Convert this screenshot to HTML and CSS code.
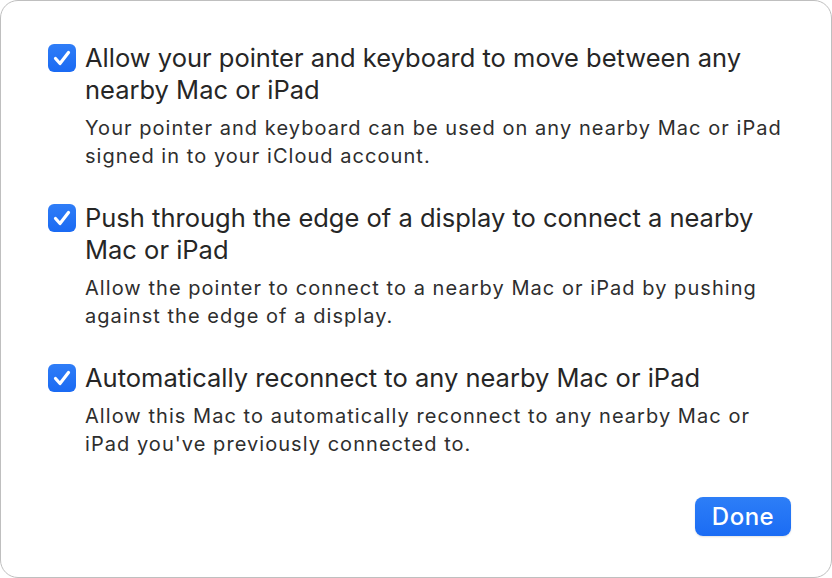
FILE: index.html
```html
<!DOCTYPE html>
<html>
<head>
<meta charset="utf-8">
<link rel="stylesheet" href="styles.css">
</head>
<body>
<div class="window">
  <div class="options">
    <div class="option">
      <span class="check"><svg viewBox="0 0 28 28" width="28" height="28"><path d="M7.5 14.5 L12 19.5 L20.5 8.5" fill="none" stroke="#fff" stroke-width="3.2" stroke-linecap="round" stroke-linejoin="round"/></svg></span>
      <div class="texts">
        <div class="title">Allow your pointer and keyboard to move between any nearby Mac or iPad</div>
        <div class="desc">Your pointer and keyboard can be used on any nearby Mac or iPad signed in to your iCloud account.</div>
      </div>
    </div>
    <div class="option">
      <span class="check"><svg viewBox="0 0 28 28" width="28" height="28"><path d="M7.5 14.5 L12 19.5 L20.5 8.5" fill="none" stroke="#fff" stroke-width="3.2" stroke-linecap="round" stroke-linejoin="round"/></svg></span>
      <div class="texts">
        <div class="title">Push through the edge of a display to connect a nearby Mac or iPad</div>
        <div class="desc">Allow the pointer to connect to a nearby Mac or iPad by pushing against the edge of a display.</div>
      </div>
    </div>
    <div class="option">
      <span class="check"><svg viewBox="0 0 28 28" width="28" height="28"><path d="M7.5 14.5 L12 19.5 L20.5 8.5" fill="none" stroke="#fff" stroke-width="3.2" stroke-linecap="round" stroke-linejoin="round"/></svg></span>
      <div class="texts">
        <div class="title">Automatically reconnect to any nearby Mac or iPad</div>
        <div class="desc">Allow this Mac to automatically reconnect to any nearby Mac or iPad you've previously connected to.</div>
      </div>
    </div>
  </div>
  <div class="footer">
    <button class="done">Done</button>
  </div>
</div>
</body>
</html>
```
FILE: styles.css
```css
html, body {
  margin: 0;
  padding: 0;
  background: #ffffff;
}
body {
  width: 832px;
  height: 578px;
  font-family: Inter, "Noto Sans", sans-serif;
  color: #262626;
}
.window {
  box-sizing: border-box;
  width: 832px;
  height: 578px;
  border: 1px solid #bfbfbf;
  border-radius: 18px;
  background: #fff;
  padding: 41px 40px 41px 47px;
  display: flex;
  flex-direction: column;
}
.options {
  display: flex;
  flex-direction: column;
  gap: 32px;
  padding-right: 8px;
}
.option {
  display: flex;
  gap: 9px;
}
.check {
  flex: none;
  width: 28px;
  height: 28px;
  margin-top: 2px;
  border-radius: 6px;
  background: linear-gradient(#2f7df7, #1a6af3);
  display: flex;
}
.texts {
  display: flex;
  flex-direction: column;
  gap: 8px;
}
.title {
  font-size: 25.5px;
  line-height: 32px;
  color: #262626;
}
.desc {
  font-size: 20px;
  letter-spacing: 1.05px;
  line-height: 28px;
  color: #2e2e2e;
}
.footer {
  margin-top: auto;
  display: flex;
  justify-content: flex-end;
}
.done {
  width: 96px;
  height: 39px;
  border: none;
  border-radius: 8px;
  background: linear-gradient(#2d7ef7, #1b6cf4);
  color: #fff;
  font-family: Inter, "Noto Sans", sans-serif;
  font-size: 24px;
  font-weight: 500;
  letter-spacing: 0.5px;
  padding: 0;
  box-shadow: 0 1px 2px rgba(0,0,0,0.12);
}
```
